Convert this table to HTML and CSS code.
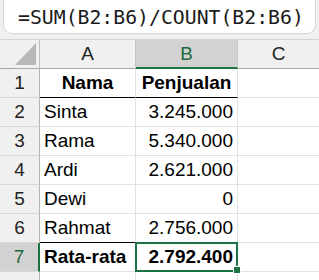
FILE: index.html
```html
<!DOCTYPE html>
<html>
<head>
<meta charset="utf-8">
<link rel="stylesheet" href="styles.css">
</head>
<body>
<div class="formula-area">
  <div class="formula-box">=SUM(B2:B6)/COUNT(B2:B6)</div>
</div>
<div class="sheet">
  <div class="hd corner"><svg width="40" height="28" viewBox="0 0 40 28"><polygon points="36,3 36,25 15,25" fill="#b8b8b8"/></svg></div>
  <div class="hd col">A</div>
  <div class="hd col sel-col">B</div>
  <div class="hd col last">C</div>

  <div class="hd row">1</div>
  <div class="c ctr b under">Nama</div>
  <div class="c ctr b under">Penjualan</div>
  <div class="c last"></div>

  <div class="hd row">2</div>
  <div class="c">Sinta</div>
  <div class="c num">3.245.000</div>
  <div class="c last"></div>

  <div class="hd row">3</div>
  <div class="c">Rama</div>
  <div class="c num">5.340.000</div>
  <div class="c last"></div>

  <div class="hd row">4</div>
  <div class="c">Ardi</div>
  <div class="c num">2.621.000</div>
  <div class="c last"></div>

  <div class="hd row">5</div>
  <div class="c">Dewi</div>
  <div class="c num">0</div>
  <div class="c last"></div>

  <div class="hd row">6</div>
  <div class="c under">Rahmat</div>
  <div class="c num">2.756.000</div>
  <div class="c last"></div>

  <div class="hd row sel-row">7</div>
  <div class="c b">Rata-rata</div>
  <div class="c num b active">2.792.400<span class="handle"></span></div>
  <div class="c last"></div>

  <div class="hd row"></div>
  <div class="c"></div>
  <div class="c"></div>
  <div class="c last"></div>
</div>
</body>
</html>
```

FILE: styles.css
```css
html, body {
  margin: 0;
  padding: 0;
  background: #ffffff;
  overflow: hidden;
}

.formula-area {
  height: 40px;
  box-sizing: border-box;
  background: #f0f0f0;
  border-bottom: 1px solid #d4d4d4;
  padding: 0 3px;
}

.formula-box {
  height: 34px;
  box-sizing: border-box;
  background: #ffffff;
  border: 1px solid #d6d6d6;
  border-top: none;
  border-radius: 0 0 9px 9px;
  padding: 3px 0 0 14px;
  font-family: "DejaVu Sans Mono", monospace;
  font-size: 19.8px;
  line-height: 30px;
  color: #1a1a1a;
  white-space: nowrap;
}

.sheet {
  display: grid;
  grid-template-columns: 40px 96px 102px 1fr;
  grid-auto-rows: 29px;
  font-family: "Liberation Sans", Arial, sans-serif;
  font-size: 19px;
  color: #000000;
}

.hd {
  background: #f0f0f0;
  box-sizing: border-box;
  border-right: 1px solid #c6c6c6;
  border-bottom: 1px solid #d8d8d8;
  text-align: center;
  line-height: 28px;
  color: #222222;
}

.corner {
  border-bottom: 1px solid #a8a8a8;
  border-right: 1px solid #c0c0c0;
}

.corner svg {
  display: block;
}

.col {
  border-bottom: 1px solid #a8a8a8;
}

.col.last {
  border-right: none;
}

.sel-col {
  background: #d2d2d2;
  color: #1d6a3f;
  border-bottom: 2px solid #1e7145;
}

.row {
  border-right: 1px solid #b4b4b4;
}

.sel-row {
  background: #d2d2d2;
  color: #1d6a3f;
  border-right: 2px solid #1e7145;
}

.c {
  box-sizing: border-box;
  border-right: 1px solid #e1e1e1;
  border-bottom: 1px solid #e1e1e1;
  line-height: 28px;
  padding: 0 4px;
  white-space: nowrap;
  position: relative;
}

.c.last {
  border-right: none;
}

.ctr {
  text-align: center;
}

.num {
  text-align: right;
}

.b {
  font-weight: bold;
}

.under {
  border-bottom: 1px solid #000000;
}

.active::after {
  content: "";
  position: absolute;
  top: -1px;
  left: -1px;
  right: -1px;
  bottom: -1px;
  border: 2px solid #1e7145;
  pointer-events: none;
}

.handle {
  position: absolute;
  right: -4px;
  bottom: -3px;
  width: 6px;
  height: 6px;
  background: #1e7145;
  border: 1px solid #ffffff;
  z-index: 2;
}
```
